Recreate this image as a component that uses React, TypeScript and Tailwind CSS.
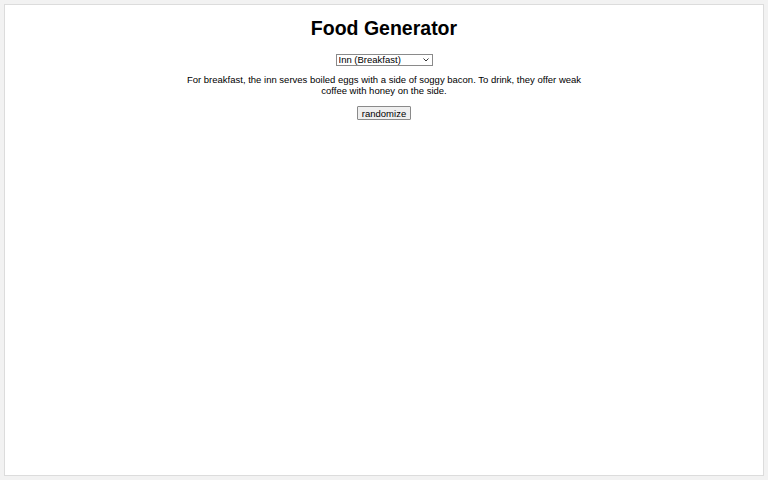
import { useState } from "react";

const MEALS: Record<string, string> = {
  "Inn (Breakfast)":
    "For breakfast, the inn serves boiled eggs with a side of soggy bacon. To drink, they offer weak coffee with honey on the side.",
  "Inn (Dinner)":
    "For dinner, the inn serves a thick mutton stew with hard bread. To drink, they offer flat ale.",
  "Tavern":
    "The tavern serves roasted chicken with turnips. To drink, they offer spiced wine.",
};

export default function App() {
  const [place, setPlace] = useState("Inn (Breakfast)");

  return (
    <div className="min-h-screen bg-[#f2f2f2] p-1 font-['Liberation_Sans',Arial,sans-serif] text-black">
      <div className="h-[472px] border border-[#dcdcdc] bg-white">
        <div className="flex flex-col items-center pt-[11px]">
          <h1 className="text-[19.5px] font-bold leading-[24px]">Food Generator</h1>

          <div className="relative mt-[14px]">
            <select
              value={place}
              onChange={(e) => setPlace(e.target.value)}
              className="block h-[12px] w-[97px] appearance-none rounded-none border border-[#8a8a8a] bg-white pl-[2px] text-[9.5px] leading-[10px]"
            >
              {Object.keys(MEALS).map((k) => (
                <option key={k}>{k}</option>
              ))}
            </select>
            {/* dropdown chevron */}
            <svg
              className="pointer-events-none absolute right-[4px] top-[4px]"
              width="6"
              height="4"
              viewBox="0 0 6 4"
              fill="none"
            >
              <path d="M0.5 0.5 L3 3 L5.5 0.5" stroke="#333" strokeWidth="1" />
            </svg>
          </div>

          <p className="mt-[8px] w-[410px] text-center text-[9.5px] leading-[11px]">{MEALS[place]}</p>

          <button className="mt-[10px] h-[14px] rounded-[1px] border border-[#8a8a8a] bg-[#efefef] px-[4px] text-[9.5px] leading-[11px]">
            randomize
          </button>
        </div>
      </div>
    </div>
  );
}
